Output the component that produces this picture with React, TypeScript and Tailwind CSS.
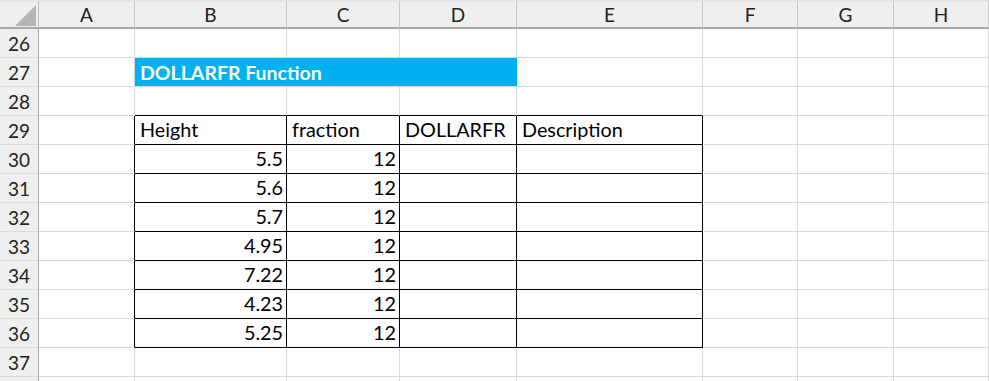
const COLS = ["A", "B", "C", "D", "E", "F", "G", "H"];

// rows 29..36 hold the bordered table in columns B..E
const TABLE: Record<number, string[]> = {
  29: ["Height", "fraction", "DOLLARFR", "Description"],
  30: ["5.5", "12", "", ""],
  31: ["5.6", "12", "", ""],
  32: ["5.7", "12", "", ""],
  33: ["4.95", "12", "", ""],
  34: ["7.22", "12", "", ""],
  35: ["4.23", "12", "", ""],
  36: ["5.25", "12", "", ""],
};

// the last row only peeks in at the bottom edge, so its number isn't drawn
const ROWS = [26, 27, 28, 29, 30, 31, 32, 33, 34, 35, 36, 37, 38];
const LAST_VISIBLE = 37;

function inTable(row: number, col: number) {
  return row >= 29 && row <= 36 && col >= 1 && col <= 4;
}

function Cell({ row, col }: { row: number; col: number }) {
  const table = inTable(row, col);
  // right edge is black when this cell or its right neighbour is part of the table
  const blackRight = table || inTable(row, col + 1);
  const blackBottom = table || inTable(row + 1, col);
  const value = TABLE[row]?.[col - 1] ?? "";
  const numeric = row > 29 && value !== "";

  return (
    <div
      className={[
        "flex items-end overflow-visible whitespace-nowrap border-r border-b pb-[4px] text-[19.8px] leading-none text-black",
        blackRight ? "border-r-black" : "border-r-[#dadada]",
        blackBottom ? "border-b-black" : "border-b-[#dadada]",
        numeric ? "justify-end pr-[3px]" : "justify-start pl-[5px]",
      ].join(" ")}
    >
      {value}
    </div>
  );
}

export default function App() {
  return (
    <div className="h-[381px] w-[989px] overflow-hidden bg-white font-['Lato',sans-serif]">
      <div className="grid grid-cols-[39px_96px_152px_113px_117px_186px_95px_96px_1fr] auto-rows-[29px]">
        {/* corner with the select-all triangle */}
        <div className="relative border-r border-b-2 border-t-2 border-r-[#bcbcbc] border-b-[#a8a8a8] border-t-[#e3e3ea] bg-[#efefef]">
          <svg className="absolute left-[15px] top-[3px]" width="21" height="21" viewBox="0 0 21 21">
            <polygon points="0,21 21,21 21,0" fill="#b5b5b5" />
          </svg>
        </div>
        {COLS.map((c) => (
          <div
            key={c}
            className="flex items-center justify-center border-r border-b-2 border-t-2 border-r-[#c6c6c6] border-b-[#a8a8a8] border-t-[#e3e3ea] bg-[#efefef] text-[19px] leading-none text-[#222]"
          >
            {c}
          </div>
        ))}

        {ROWS.map((r) => (
          <div key={r} className="contents">
            <div className="flex items-center justify-center border-r border-b border-r-[#a8a8a8] border-b-[#dadada] bg-[#efefef] pt-[1px] text-[19px] leading-none text-[#222]">
              {r <= LAST_VISIBLE ? r : null}
            </div>
            <div
              className={[
                "border-r border-b border-b-[#dadada]",
                r >= 29 && r <= 36 ? "border-r-black" : "border-r-[#dadada]",
              ].join(" ")}
            />
            {r === 27 ? (
              <div className="col-span-3 flex items-end border-b border-b-[#dadada] bg-[#00b0f0] pb-[4px] pl-[5px] text-[19.5px] font-bold leading-none text-white">
                DOLLARFR Function
              </div>
            ) : (
              [1, 2, 3].map((c) => <Cell key={c} row={r} col={c} />)
            )}
            {[4, 5, 6, 7].map((c) => (
              <Cell key={c} row={r} col={c} />
            ))}
          </div>
        ))}
      </div>
    </div>
  );
}
